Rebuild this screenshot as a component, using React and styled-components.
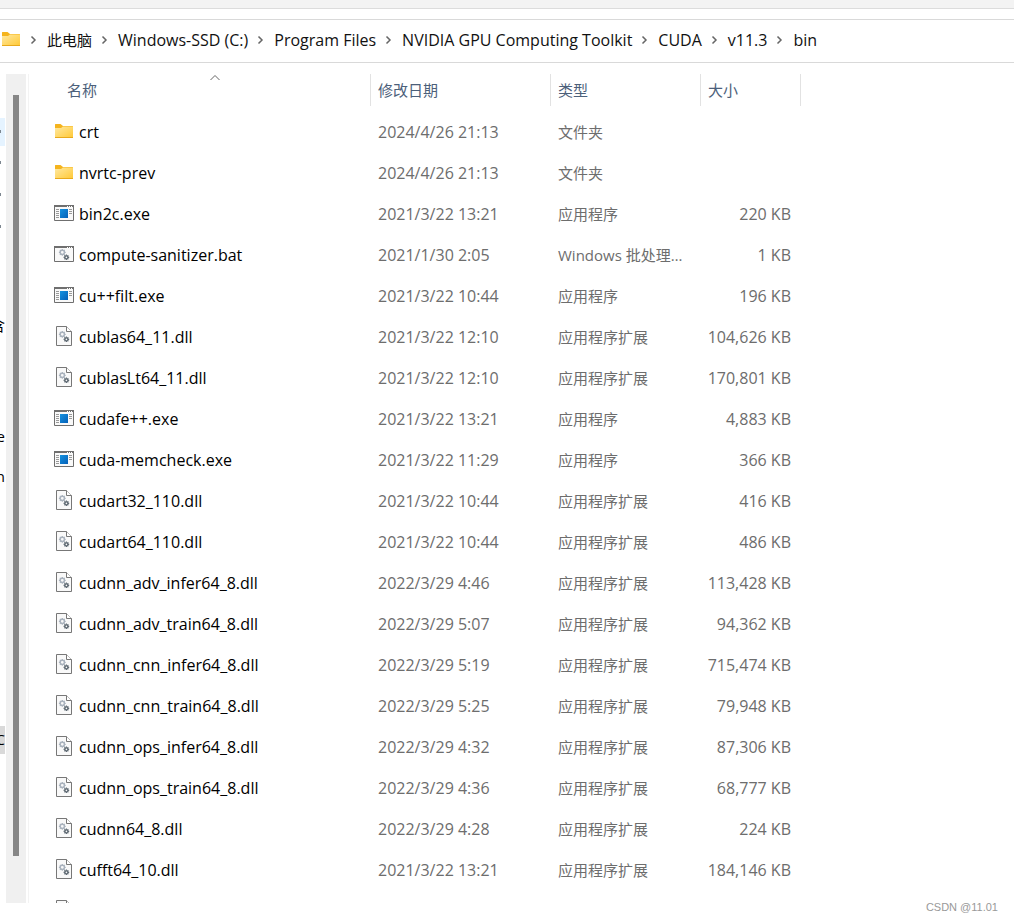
import React from "react";
import styled, { createGlobalStyle } from "styled-components";

const latin = `"Open Sans", "Noto Sans", "Noto Sans CJK SC", sans-serif`;

const GlobalStyle = createGlobalStyle`
  * { box-sizing: border-box; }
  body { margin: 0; background: #fff; color: #000; font: 16px/20px ${latin}; }
`;

const Page = styled.div`
  display: flex;
  flex-direction: column;
  height: 100vh;
  overflow: hidden;
`;
const CommandBar = styled.header`
  flex: none;
  height: 9px;
  background: #f3f3f3;
  border-bottom: 1px solid #dcdcdc;
`;
const AddressBar = styled.nav`
  flex: none;
  display: flex;
  align-items: center;
  height: 44px;
  margin: 10px 0 11px;
  padding: 0 0 2px 1px;
  border-top: 1px solid #d9d9d9;
  border-bottom: 1px solid #d9d9d9;
  white-space: nowrap;
`;
const Crumb = styled.a`
  color: #111;
  font-size: ${(p) => (p.$cjk ? 15 : 16)}px;
  text-decoration: none;
`;
const Separator = styled.svg`
  flex: none;
  width: 26px;
  height: 10px;
`;
const Body = styled.div`
  flex: 1;
  min-height: 0;
  display: flex;
`;
const Tree = styled.nav`
  flex: none;
  width: 5px;
  margin-right: 1px;
  overflow: hidden;
  font-size: 15px;
`;
const TreeItem = styled.div`
  display: flex;
  align-items: center;
  justify-content: flex-end;
  height: 28px;
  margin-top: ${(p) => p.$gap}px;
  padding-bottom: 2px;
  background: ${(p) => p.$fill || "transparent"};
`;
const Pin = styled.span`
  flex: none;
  width: 1px;
  height: 3px;
  margin-right: 4px;
  background: #7d8790;
`;
const ScrollTrack = styled.div`
  flex: none;
  width: 20px;
  padding: 21px 7px 47px 7px;
  background: #f0f0f0;
`;
const ScrollThumb = styled.div`
  width: 6px;
  height: 100%;
  background: #868686;
`;
const FilePane = styled.main`
  flex: 1;
  min-width: 0;
  margin-left: 2px;
  border-left: 1px solid #f3f3f3;
  overflow: hidden;
`;
const FileTable = styled.table`
  width: 772px;
  table-layout: fixed;
  border-collapse: collapse;
`;
const HeadCell = styled.th`
  height: 37px;
  padding: 0 0 0 ${(p) => (p.$first ? 31 : 0)}px;
  vertical-align: top;
  font-size: 15px;
  font-weight: 400;
`;
const SortButton = styled.button`
  position: relative;
  display: block;
  width: 100%;
  height: 32px;
  padding: 0 7px 1px;
  border: 0;
  border-right: 1px solid #e2e2e2;
  background: none;
  color: #4c607a;
  font: inherit;
  text-align: left;
`;
const SortArrow = styled.svg`
  position: absolute;
  top: 0;
  left: 50%;
  width: 12px;
  height: 7px;
  margin-left: -6px;
`;
const Cell = styled.td`
  height: 41px;
  padding: 0 10px 0 7px;
  color: #6d6d6d;
  font-size: ${(p) => (p.$cjk ? 15 : 16)}px;
  text-align: ${(p) => (p.$right ? "right" : "left")};
  white-space: nowrap;
  overflow: hidden;
  text-overflow: ellipsis;
`;
const SizeCell = styled(Cell)`
  padding-left: 0;
`;
const NameCell = styled(Cell)`
  padding: 0 8px 0 25px;
  color: #000;
`;
const FileName = styled.div`
  display: flex;
  align-items: center;
  gap: 5px;
`;
const Icon = styled.svg`
  flex: none;
  width: 20px;
  height: 20px;
  margin-bottom: 2px;
`;
const Footer = styled.footer`
  flex: none;
  height: 18px;
  padding-right: 16px;
  color: #999;
  font: 11px/9px "Liberation Sans", sans-serif;
  text-align: right;
`;

const FolderShape = () => (
  <>
    <path d="M1 3.5Q1 3 1.500 3H6.500L9 5H18.500Q19 5 19 5.500V10H1Z" fill="#f5b41d" />
    <path d="M1 7H7L9 5.500H19V16.500H1Z" fill="url(#folderFill)" />
    <path d="M1 16.500H19" stroke="#e8a91c" />
  </>
);
const Gear = ({ x, y, r, w, color }) => (
  <g transform={`translate(${x} ${y})`} stroke={color} fill="none">
    <circle r={r} strokeWidth={w} />
    {[0, 45, 90, 135].map((a) => (
      <path key={a} transform={`rotate(${a})`} strokeWidth="1.2" d={`M0 ${-r - 1.3}V${-r}M0 ${r}V${r + 1.3}`} />
    ))}
  </g>
);
const Gears = () => (
  <>
    <Gear x={8.3} y={8.3} r={2.1} w={1.4} color="#a9b2bd" />
    <Gear x={12.4} y={13.3} r={1.5} w={1.3} color="#5f6a73" />
  </>
);
const FrameShape = () => (
  <>
    <path d="M.5 2.500H19.500V17.500H.5Z" fill="#f9f9f9" stroke="#6f6f6f" />
    <path d="M0 3H20" stroke="#6f6f6f" strokeWidth="2" />
    <path d="M13 3.500H18" stroke="#fff" strokeDasharray="1 1" />
  </>
);
const shapes = {
  folder: <FolderShape />,
  exe: (
    <>
      <FrameShape />
      <path d="M6 6H14V15H6Z" fill="url(#exeFill)" />
      <path d="M2 6.500H5M2 8.500H5M2 10.500H5M2 12.500H5M2 14.500H5M15 6.500H18M15 8.500H18M15 10.500H18" stroke="#9a9a9a" />
    </>
  ),
  bat: (
    <>
      <FrameShape />
      <Gears />
    </>
  ),
  dll: (
    <>
      <path d="M2.500 .5H12.500L17.500 5.500V19.500H2.500Z" fill="#f9f9f9" stroke="#777" />
      <path d="M12.500 .5V5.500H17.500" fill="#fff" stroke="#777" />
      <Gears />
    </>
  ),
};
const FileIcon = ({ kind }) => (
  <Icon viewBox="0 0 20 20" aria-hidden="true">{shapes[kind]}</Icon>
);

const crumbs = ["此电脑", "Windows-SSD (C:)", "Program Files", "NVIDIA GPU Computing Toolkit", "CUDA", "v11.3", "bin"];
const typeNames = { folder: "文件夹", exe: "应用程序", bat: "Windows 批处理文件", dll: "应用程序扩展" };
const files = [
  ["crt", "2024/4/26 21:13", "folder", ""],
  ["nvrtc-prev", "2024/4/26 21:13", "folder", ""],
  ["bin2c.exe", "2021/3/22 13:21", "exe", "220 KB"],
  ["compute-sanitizer.bat", "2021/1/30 2:05", "bat", "1 KB"],
  ["cu++filt.exe", "2021/3/22 10:44", "exe", "196 KB"],
  ["cublas64_11.dll", "2021/3/22 12:10", "dll", "104,626 KB"],
  ["cublasLt64_11.dll", "2021/3/22 12:10", "dll", "170,801 KB"],
  ["cudafe++.exe", "2021/3/22 13:21", "exe", "4,883 KB"],
  ["cuda-memcheck.exe", "2021/3/22 11:29", "exe", "366 KB"],
  ["cudart32_110.dll", "2021/3/22 10:44", "dll", "416 KB"],
  ["cudart64_110.dll", "2021/3/22 10:44", "dll", "486 KB"],
  ["cudnn_adv_infer64_8.dll", "2022/3/29 4:46", "dll", "113,428 KB"],
  ["cudnn_adv_train64_8.dll", "2022/3/29 5:07", "dll", "94,362 KB"],
  ["cudnn_cnn_infer64_8.dll", "2022/3/29 5:19", "dll", "715,474 KB"],
  ["cudnn_cnn_train64_8.dll", "2022/3/29 5:25", "dll", "79,948 KB"],
  ["cudnn_ops_infer64_8.dll", "2022/3/29 4:32", "dll", "87,306 KB"],
  ["cudnn_ops_train64_8.dll", "2022/3/29 4:36", "dll", "68,777 KB"],
  ["cudnn64_8.dll", "2022/3/29 4:28", "dll", "224 KB"],
  ["cufft64_10.dll", "2021/3/22 13:21", "dll", "184,146 KB"],
];

export default function App() {
  return (
    <Page>
      <GlobalStyle />
      <svg width="0" height="0" style={{ position: "absolute" }} aria-hidden="true">
        <defs>
          <linearGradient id="folderFill" x1="0" y1="0" x2="1" y2="1">
            <stop offset="0" stopColor="#ffe9a2" />
            <stop offset="1" stopColor="#ffc937" />
          </linearGradient>
          <linearGradient id="exeFill" x1="0" y1="0" x2="1" y2="1">
            <stop offset="0" stopColor="#1492e0" />
            <stop offset="1" stopColor="#0560b8" />
          </linearGradient>
        </defs>
      </svg>
      <CommandBar />
      <AddressBar>
        <FileIcon kind="folder" />
        {crumbs.map((c, i) => (
          <React.Fragment key={c}>
            <Separator viewBox="0 0 26 10" aria-hidden="true">
              <path d="M10.500 1.500L14 5L10.500 8.500" fill="none" stroke="#666" strokeWidth="1.5" />
            </Separator>
            <Crumb href="#" $cjk={i === 0}>{c}</Crumb>
          </React.Fragment>
        ))}
      </AddressBar>
      <Body>
        <Tree>
          <TreeItem $gap={44} $fill="#e5f3ff"><Pin /></TreeItem>
          <TreeItem $gap={3}><Pin /></TreeItem>
          <TreeItem $gap={4}><Pin /></TreeItem>
          <TreeItem $gap={4}><Pin /></TreeItem>
          <TreeItem $gap={71}>含</TreeItem>
          <TreeItem $gap={83}>e</TreeItem>
          <TreeItem $gap={12}>n</TreeItem>
          <TreeItem $gap={235} $fill="#d9d9d9">C</TreeItem>
        </Tree>
        <ScrollTrack><ScrollThumb /></ScrollTrack>
        <FilePane>
          <FileTable>
            <colgroup>
              <col style={{ width: 342 }} />
              <col style={{ width: 180 }} />
              <col style={{ width: 150 }} />
              <col style={{ width: 100 }} />
            </colgroup>
            <thead>
              <tr>
                <HeadCell $first>
                  <SortButton>
                    名称
                    <SortArrow viewBox="0 0 12 7" aria-hidden="true">
                      <path d="M1.500 6L6 1.500L10.500 6" fill="none" stroke="#666" />
                    </SortArrow>
                  </SortButton>
                </HeadCell>
                {["修改日期", "类型", "大小"].map((h) => (
                  <HeadCell key={h}><SortButton>{h}</SortButton></HeadCell>
                ))}
              </tr>
            </thead>
            <tbody>
              {files.map(([name, date, kind, size]) => (
                <tr key={name}>
                  <NameCell><FileName><FileIcon kind={kind} />{name}</FileName></NameCell>
                  <Cell>{date}</Cell>
                  <Cell $cjk>{typeNames[kind]}</Cell>
                  <SizeCell $right>{size}</SizeCell>
                </tr>
              ))}
              <tr>
                <NameCell><FileName><FileIcon kind="dll" /></FileName></NameCell>
                <Cell /><Cell /><Cell />
              </tr>
            </tbody>
          </FileTable>
        </FilePane>
      </Body>
      <Footer>CSDN @11.01</Footer>
    </Page>
  );
}
